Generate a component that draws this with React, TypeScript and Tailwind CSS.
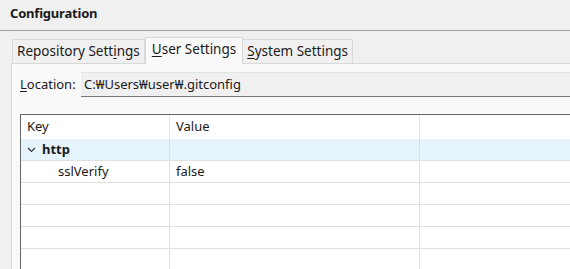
import React from 'react';

const font = { fontFamily: '"Noto Sans", "Noto Sans CJK KR", sans-serif' };

function Tab({ label, mn, selected }: { label: string; mn: number; selected?: boolean }) {
  const before = label.slice(0, mn);
  const ch = label[mn];
  const after = label.slice(mn + 1);
  return (
    <div
      className={
        selected
          ? 'relative z-10 -mb-px flex h-[27px] items-center border border-b-0 border-[#d9d9d9] bg-[#f9f9f9] px-[6px] pb-[2px]'
          : 'flex h-[24px] items-center border border-b-0 border-l-0 border-[#d9d9d9] bg-[#f0f0f0] px-[4px] first:border-l'
      }
    >
      <span className="text-[13.5px] leading-none text-[#1a1a1a]">
        {before}
        <span className="underline underline-offset-2">{ch}</span>
        {after}
      </span>
    </div>
  );
}

const rows = [
  { key: 'http', value: '', group: true },
  { key: 'sslVerify', value: 'false' },
  { key: '', value: '' },
  { key: '', value: '' },
  { key: '', value: '' },
  { key: '', value: '' },
];

export default function App() {
  return (
    <div className="h-[269px] w-[570px] overflow-hidden bg-[#f0f0f0] text-[#1a1a1a]" style={font}>
      <div className="flex h-[31px] items-center border-b border-[#a0a0a0] px-[10px] pb-[2px]">
        <span className="text-[13px] font-bold tracking-[-0.2px]">Configuration</span>
      </div>
      <div className="pl-[11px] pt-[6px]">
        <div className="flex items-end pl-[1px]">
          <Tab label="Repository Settings" mn={15} />
          <Tab label="User Settings" mn={0} selected />
          <Tab label="System Settings" mn={0} />
        </div>
        <div className="h-[220px] border-l border-t border-[#d9d9d9] bg-[#f9f9f9] pl-[8px] pt-[8px]">
          <div className="flex items-center">
            <span className="w-[61px] text-[13px]">
              <span className="underline underline-offset-2">L</span>ocation:
            </span>
            <div className="flex h-[25px] flex-1 items-center border-t border-b border-t-[#e3e3e3] border-b-[#7a7a7a] bg-[#f0f0f0] px-[3px] text-[13px]">
              C:₩Users₩user₩.gitconfig
            </div>
          </div>
          <div className="mt-[17px] border-l border-t border-[#666666] bg-white">
            <div className="flex h-[24px] text-[13px]">
              <div className="flex w-[149px] items-center border-r border-[#e5e5e5] pl-[6px]">Key</div>
              <div className="flex w-[250px] items-center border-r border-[#e5e5e5] pl-[6px]">Value</div>
              <div className="flex-1" />
            </div>
            {rows.map((r, i) => (
              <div
                key={i}
                className={`flex h-[22px] border-b border-[#e0e0e0] text-[13px] ${r.group ? 'bg-[#e5f3fd]' : ''}`}
              >
                <div className="flex w-[149px] items-center border-r border-[#e0e0e0]">
                  {r.group ? (
                    <>
                      <svg width="9" height="6" viewBox="0 0 9 6" className="ml-[6px] mr-[6px]">
                        <path d="M1 1l3.5 3.5L8 1" fill="none" stroke="#333" strokeWidth="1.1" />
                      </svg>
                      <span className="font-bold">{r.key}</span>
                    </>
                  ) : (
                    <span className="pl-[37px]">{r.key}</span>
                  )}
                </div>
                <div className="flex w-[250px] items-center border-r border-[#e0e0e0] pl-[6px]">{r.value}</div>
                <div className="flex-1" />
              </div>
            ))}
          </div>
        </div>
      </div>
    </div>
  );
}
